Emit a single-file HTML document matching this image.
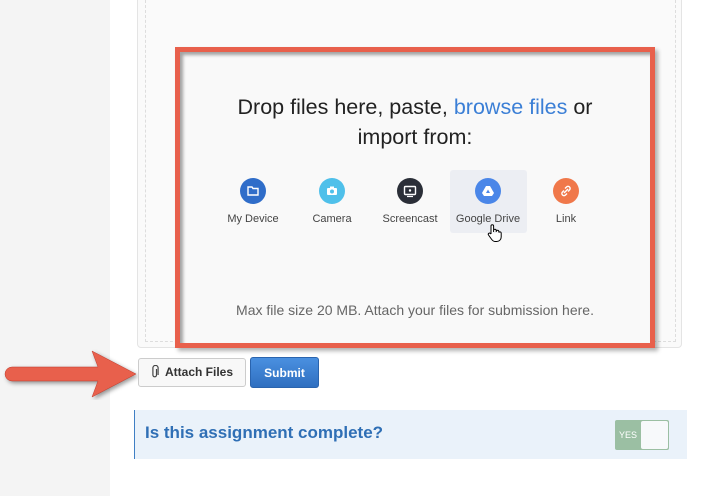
<!DOCTYPE html>
<html><head><style>
body{margin:0;width:728px;height:496px;background:#fff;position:relative;overflow:hidden;font-family:"Liberation Sans",sans-serif}
.side{position:absolute;left:0;top:0;width:110px;height:496px;background:#f4f4f4}
.outer{position:absolute;left:137px;top:-5px;width:545px;height:353px;border:1px solid #e4e4e4;border-radius:4px;background:#fafafa;box-sizing:border-box}
.dash{position:absolute;left:145px;top:-5px;width:531px;height:347px;border:1px dashed #ddd;box-sizing:border-box}
.red{position:absolute;left:175px;top:47px;width:480px;height:301px;border:5px solid #e8604c;box-sizing:border-box;box-shadow:inset 3px 3px 3px rgba(0,0,0,.35),3px 3px 4px rgba(0,0,0,.3);background:#f9f9f9}
.t{position:absolute;left:175px;width:480px;text-align:center;font-size:21.5px;color:#222}
.ic{position:absolute;top:178px;width:26px;height:26px;border-radius:50%}
.lb{position:absolute;top:213px;width:80px;text-align:center;font-size:11px;color:#444}
.hl{position:absolute;left:450px;top:170px;width:77px;height:63px;background:#eceef3;border-radius:3px}
.btn{position:absolute;font-size:12px;font-weight:bold;box-sizing:border-box;border-radius:3px;text-align:center}
</style></head><body>
<div class="side"></div>
<div class="outer"></div><div class="dash"></div>
<div class="red"></div>
<div class="t" style="top:95px">Drop files here, paste, <span style="color:#3b7fd6">browse files</span> or</div>
<div class="t" style="top:125px">import from:</div>
<div class="hl"></div>
<div class="ic" style="left:240px;background:#2f6dc9"><svg width="26" height="26"><path d="M8 9h4l1 1.5h5v6.5H8z" fill="none" stroke="#fff" stroke-width="1.4"/></svg></div>
<div class="ic" style="left:319px;background:#4fc0ea"><svg width="26" height="26"><rect x="8" y="10" width="10" height="7" rx="1" fill="#fff"/><rect x="11" y="8.5" width="4" height="2" fill="#fff"/><circle cx="13" cy="13.5" r="2" fill="#4fc0ea"/></svg></div>
<div class="ic" style="left:397px;background:#2b2f38"><svg width="26" height="26"><rect x="7.5" y="8.5" width="11" height="8" rx="1" fill="none" stroke="#fff" stroke-width="1.4"/><circle cx="13" cy="12.5" r="1.2" fill="#fff"/><path d="M10 18.5h6" stroke="#fff" stroke-width="1.2"/></svg></div>
<div class="ic" style="left:475px;background:#4a86e8"><svg width="26" height="26"><path d="M11 8h4l4 7-2 3H9l-2-3z" fill="#fff"/><path d="M13 11.5l2 3.5h-4z" fill="#4a86e8"/></svg></div>
<div class="ic" style="left:553px;background:#f0784a"><svg width="26" height="26"><path d="M11 15l4-4M12 10.5l1.5-1.5a2.1 2.1 0 013 3L15 13.5M14 15.5l-1.5 1.5a2.1 2.1 0 01-3-3L11 12.5" fill="none" stroke="#fff" stroke-width="1.4"/></svg></div>
<div class="lb" style="left:213px">My Device</div>
<div class="lb" style="left:292px">Camera</div>
<div class="lb" style="left:370px">Screencast</div>
<div class="lb" style="left:448px">Google Drive</div>
<div class="lb" style="left:526px">Link</div>
<svg style="position:absolute;left:486px;top:223px" width="16" height="20"><path d="M5 11V3a1.3 1.3 0 012.6 0v6M7.6 9V7.5a1.3 1.3 0 012.6 0V9M10.2 9V8.5a1.3 1.3 0 012.6 0v1M12.8 9.5a1.3 1.3 0 012.4.5v4c0 2.5-2 4.5-4.5 4.5H9C7 18.5 6 17 5 15.5L2.5 12a1.2 1.2 0 012-1.4L5 11" fill="#fff" stroke="#000" stroke-width="1"/></svg>
<div style="position:absolute;left:175px;width:480px;top:302px;text-align:center;font-size:14px;color:#666">Max file size 20 MB. Attach your files for submission here.</div>
<svg style="position:absolute;left:0;top:345px" width="145" height="55"><path d="M12 22h86l-6-16 44 23-44 23 6-16H12a7 7 0 010-14z" fill="#e8604c" stroke="#c0392b" stroke-width=".5" style="filter:drop-shadow(2px 2px 2px rgba(0,0,0,.4))"/></svg>
<div class="btn" style="left:138px;top:358px;width:108px;height:29px;border:1px solid #ccc;background:#f8f8f8;color:#333;line-height:27px"><svg width="8" height="13" style="vertical-align:-2px;margin-right:6px"><path d="M5.5 4v6a1.8 1.8 0 01-3.6 0V3a2.6 2.6 0 015.2 0v7" fill="none" stroke="#444" stroke-width="1.2"/></svg>Attach Files</div>
<div class="btn" style="left:250px;top:357px;width:69px;height:31px;background:linear-gradient(#4a90e0,#2f6fc0);color:#fff;line-height:31px;border:1px solid #2a64ae">Submit</div>
<div style="position:absolute;left:134px;top:410px;width:552px;height:49px;background:#eaf2fa;border-left:1px solid #3f7fc4"></div>
<div style="position:absolute;left:145px;top:423px;font-size:17px;font-weight:bold;color:#2f6fb5">Is this assignment complete?</div>
<div style="position:absolute;left:615px;top:420px;width:54px;height:30px;background:#9bbfa3;border-radius:2px"></div>
<div style="position:absolute;left:619px;top:430px;font-size:9px;color:#fff">YES</div>
<div style="position:absolute;left:641px;top:421px;width:27px;height:28px;background:#f7f9fb;border-radius:2px"></div>
</body></html>
